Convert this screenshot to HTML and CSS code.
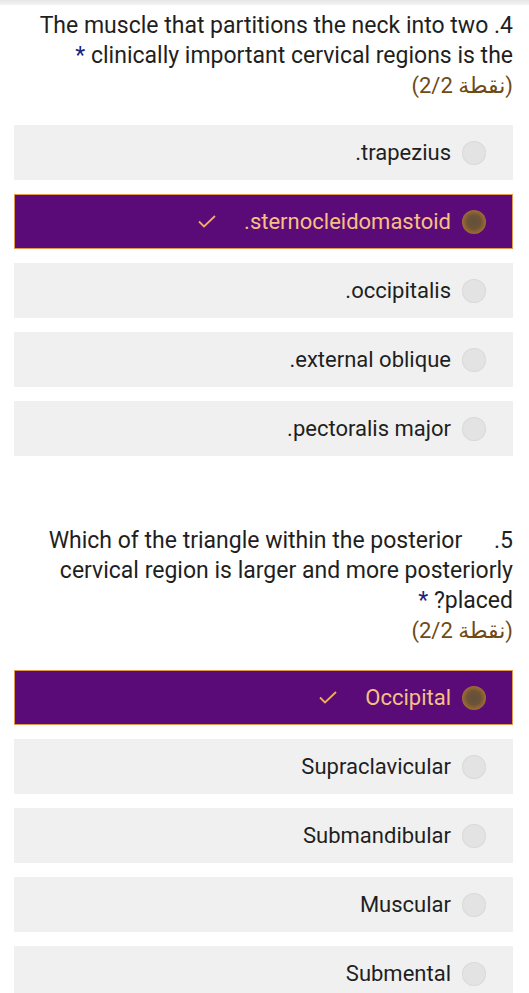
FILE: index.html
```html
<!DOCTYPE html>
<html lang="ar">
<head>
<meta charset="UTF-8">
<meta name="viewport" content="width=device-width, initial-scale=1.0">
<title>Quiz</title>
<link rel="stylesheet" href="styles.css">
</head>
<body>

<div class="topbar"></div>

<!-- Question 4 -->
<div class="question" dir="rtl">
    <div class="q-title"><span class="q-num">4.</span> The muscle that partitions the neck into two clinically important cervical regions is the <span class="req">*</span></div>
    <div class="q-points" dir="ltr">(2/2 نقطة)</div>
    <div class="choices">
        <div class="choice"><span class="radio"></span><span class="label">trapezius.</span></div>
        <div class="choice selected">
            <span class="radio"></span><span class="label">sternocleidomastoid.</span>
            <svg class="check" width="18" height="13" viewBox="0 0 18 13"><polyline points="1,6.5 6,11.5 17,1" /></svg>
        </div>
        <div class="choice"><span class="radio"></span><span class="label">occipitalis.</span></div>
        <div class="choice"><span class="radio"></span><span class="label">external oblique.</span></div>
        <div class="choice"><span class="radio"></span><span class="label">pectoralis major.</span></div>
    </div>
</div>

<!-- Question 5 -->
<div class="question" dir="rtl">
    <div class="q-title"><span class="q-num wide">5.</span> Which of the triangle within the posterior cervical region is larger and more posteriorly placed? <span class="req">*</span></div>
    <div class="q-points" dir="ltr">(2/2 نقطة)</div>
    <div class="choices">
        <div class="choice selected">
            <span class="radio"></span><span class="label">Occipital</span>
            <svg class="check" width="18" height="13" viewBox="0 0 18 13"><polyline points="1,6.5 6,11.5 17,1" /></svg>
        </div>
        <div class="choice"><span class="radio"></span><span class="label">Supraclavicular</span></div>
        <div class="choice"><span class="radio"></span><span class="label">Submandibular</span></div>
        <div class="choice"><span class="radio"></span><span class="label">Muscular</span></div>
        <div class="choice"><span class="radio"></span><span class="label">Submental</span></div>
    </div>
</div>

</body>
</html>
```

FILE: styles.css
```css
body {
    margin: 0;
    background-color: #ffffff;
    font-family: Roboto, "Noto Sans", "DejaVu Sans", sans-serif;
    color: #1f1f1f;
}

.topbar {
    height: 5px;
    background: linear-gradient(#e6e6e6, #f4f4f4);
}

/* Question block */
.question {
    padding: 6px 16px 0 16px;
}

.question + .question {
    margin-top: 64px;
}

.q-title {
    font-size: 23px;
    line-height: 30px;
    color: #1f1f1f;
}

.q-num.wide {
    margin-left: 26px;
}

.req {
    color: #1a237e;
}

.q-points {
    text-align: right;
    font-size: 22px;
    line-height: 30px;
    color: #6e4a14;
}

/* Choices */
.choices {
    display: flex;
    flex-direction: column;
    gap: 14px;
    margin: 24px 0 0 -2px;
}

.choice {
    display: flex;
    align-items: center;
    height: 55px;
    box-sizing: border-box;
    padding-right: 27px;
    background-color: #f0f0f0;
    font-size: 22px;
}

.radio {
    width: 24px;
    height: 24px;
    border-radius: 50%;
    background-color: #e3e3e3;
    box-shadow: inset 0 0 0 1px #dadada;
    flex-shrink: 0;
}

.label {
    margin-right: 11px;
}

.choice.selected {
    background-color: #5a0b78;
    border: 1px solid #e39a4c;
    padding-right: 26px;
    color: #f6c083;
}

.choice.selected .radio {
    background: radial-gradient(circle, #5e5040 0%, #6f5335 40%, #b47832 85%, #c98a3e 100%);
    box-shadow: none;
}

.check {
    margin-right: 28px;
    fill: none;
    stroke: #f0ae5c;
    stroke-width: 1.8;
}
```
